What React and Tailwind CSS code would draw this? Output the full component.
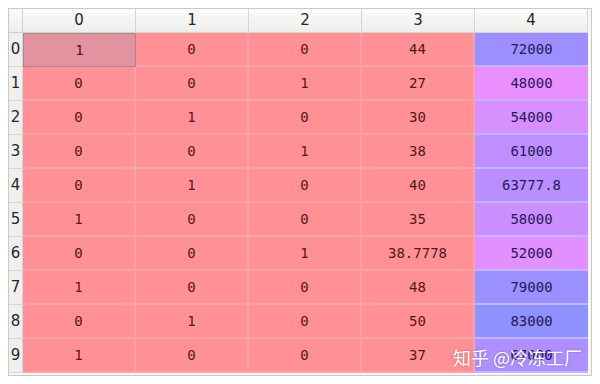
import React from "react";

const rows = [
  ["1", "0", "0", "44", "72000", "#9d8fff"],
  ["0", "0", "1", "27", "48000", "#ea8fff"],
  ["0", "1", "0", "30", "54000", "#d88fff"],
  ["0", "0", "1", "38", "61000", "#c08fff"],
  ["0", "1", "0", "40", "63777.8", "#b98fff"],
  ["1", "0", "0", "35", "58000", "#cc8fff"],
  ["0", "0", "1", "38.7778", "52000", "#e28fff"],
  ["1", "0", "0", "48", "79000", "#9a90ff"],
  ["0", "1", "0", "50", "83000", "#8f91ff"],
  ["1", "0", "0", "37", "67000", "#ae8fff"],
];

export default function App() {
  return (
    <div className="w-[600px] h-[384px] bg-white relative" style={{ fontFamily: "'DejaVu Sans', sans-serif" }}>
      <div className="absolute left-[8px] top-[8px] w-[584px] h-[368px] border border-[#c9c9c9] bg-[#f7f7f7]">
        <div className="grid grid-cols-[14px_repeat(5,113px)] grid-rows-[24px_repeat(10,34px)]">
          <div className="bg-gradient-to-b from-[#fbfbfa] to-[#eeeeec] border-b border-r border-[#cfcfcf]" />
          {["0", "1", "2", "3", "4"].map((h) => (
            <div
              key={h}
              className="bg-gradient-to-b from-[#fbfbfa] to-[#eeeeec] border-b border-r border-[#d4d4d2] flex items-center justify-center text-[15px] text-[#262626]"
            >
              {h}
            </div>
          ))}
          {rows.map((r, i) => (
            <React.Fragment key={i}>
              <div className="bg-[#efefed] border-r border-b border-[#d6d6d4] flex items-center justify-center text-[15px] text-[#262626]">
                {i}
              </div>
              {r.slice(0, 4).map((v, j) => (
                <div
                  key={j}
                  className={
                    i === 0 && j === 0
                      ? "bg-[#e3929f] border border-[#a38a8c] flex items-center justify-center text-[14px] text-[#501620]"
                      : "bg-[#ff9096] border-r-2 border-b-2 border-[#f6a2a6] flex items-center justify-center text-[14px] text-[#55161a]"
                  }
                  style={{ fontFamily: "'DejaVu Sans Mono', monospace" }}
                >
                  {v}
                </div>
              ))}
              <div
                className="border-b-2 border-[#c3b6ff] flex items-center justify-center text-[14px] text-[#26185a]"
                style={{ backgroundColor: r[5], fontFamily: "'DejaVu Sans Mono', monospace" }}
              >
                {r[4]}
              </div>
            </React.Fragment>
          ))}
        </div>
      </div>
      <div
        className="absolute left-[453px] top-[344px] text-[18px] text-white"
        style={{ fontFamily: "'Noto Sans CJK SC', sans-serif", textShadow: "0 0 2px rgba(0,0,0,0.35)" }}
      >
        知乎 @冷冻工厂
      </div>
    </div>
  );
}
